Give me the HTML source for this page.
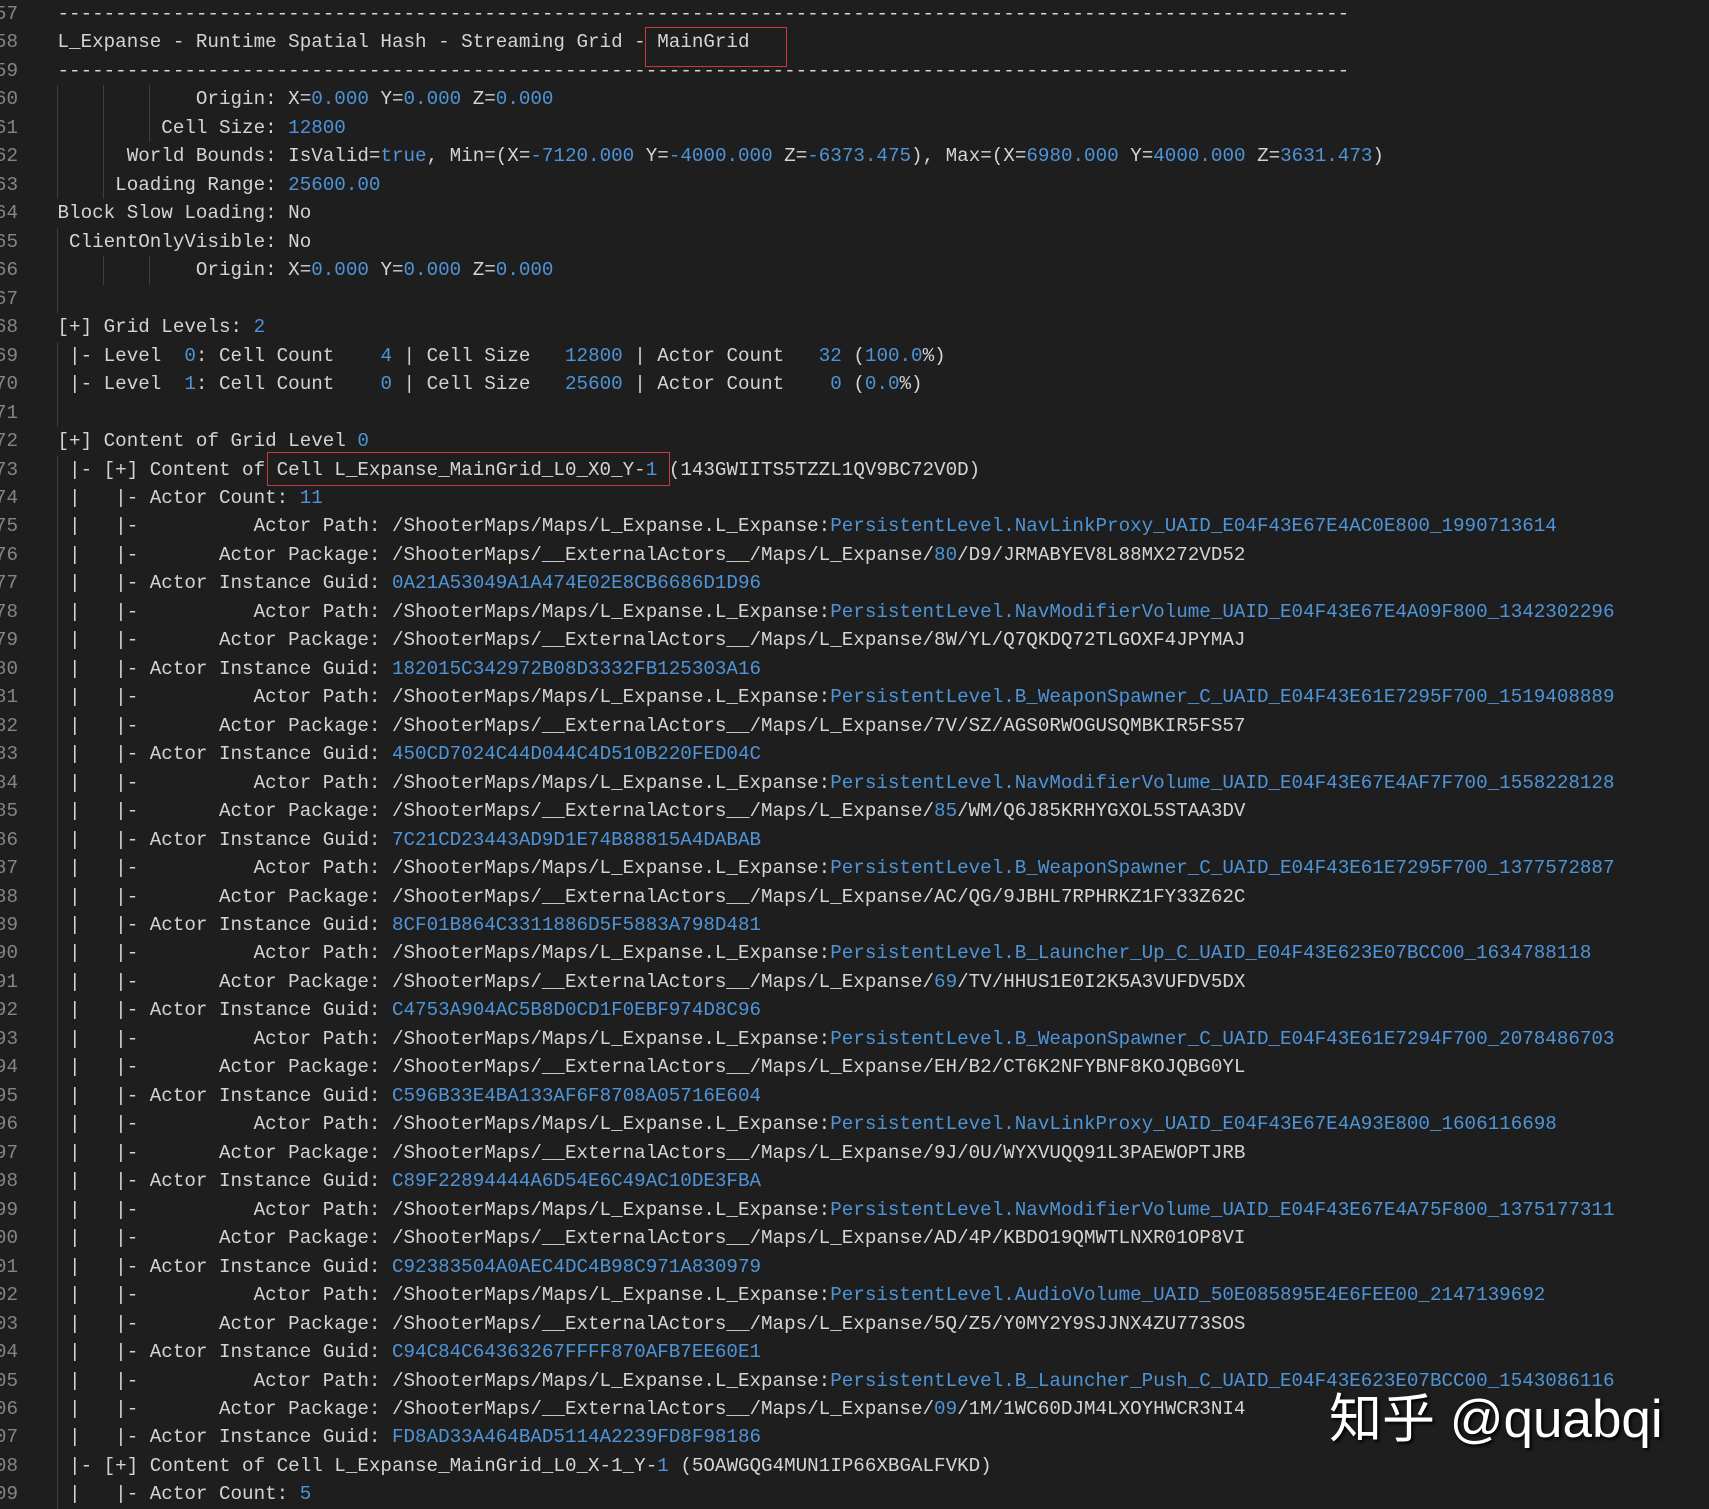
<!DOCTYPE html>
<html><head><meta charset="utf-8">
<style>
html,body{margin:0;padding:0;background:#1e1e1e;width:1709px;height:1501px;overflow:hidden;}
#c{position:absolute;left:0;top:0;width:1709px;}
.l{position:relative;height:28.47px;line-height:28.47px;padding-left:57.5px;white-space:pre;font-family:"Liberation Mono",monospace;font-size:19.23px;color:#d4d4d4;}
.l i{position:absolute;left:-40px;width:58px;text-align:right;font-style:normal;color:#858585;}
.b{color:#4e94d8;}
.a{background:linear-gradient(#3e3e3e,#3e3e3e) 57px 0/1px 100% no-repeat;}
.a2{background:linear-gradient(#3e3e3e,#3e3e3e) 57px 0/1px 100% no-repeat,linear-gradient(#3e3e3e,#3e3e3e) 103px 0/1px 100% no-repeat;}
.a3{background:linear-gradient(#3e3e3e,#3e3e3e) 57px 0/1px 100% no-repeat,linear-gradient(#3e3e3e,#3e3e3e) 103px 0/1px 100% no-repeat,linear-gradient(#3e3e3e,#3e3e3e) 149px 0/1px 100% no-repeat;}
.box{position:absolute;border:1.5px solid #c8393b;}
#wm{position:absolute;left:1329px;top:1389px;font-family:"Liberation Sans","Noto Sans CJK SC",sans-serif;font-size:53px;color:#fff;line-height:62px;white-space:pre;text-shadow:2px 2px 3px #000;}
</style></head><body>
<div id="c">
<div class="l"><i>57</i>----------------------------------------------------------------------------------------------------------------</div>
<div class="l"><i>58</i>L_Expanse - Runtime Spatial Hash - Streaming Grid - MainGrid</div>
<div class="l"><i>59</i>----------------------------------------------------------------------------------------------------------------</div>
<div class="l a3"><i>60</i>            Origin: X=<span class="b">0.000</span> Y=<span class="b">0.000</span> Z=<span class="b">0.000</span></div>
<div class="l a3"><i>61</i>         Cell Size: <span class="b">12800</span></div>
<div class="l a2"><i>62</i>      World Bounds: IsValid=<span class="b">true</span>, Min=(X=<span class="b">-7120.000</span> Y=<span class="b">-4000.000</span> Z=<span class="b">-6373.475</span>), Max=(X=<span class="b">6980.000</span> Y=<span class="b">4000.000</span> Z=<span class="b">3631.473</span>)</div>
<div class="l a2"><i>63</i>     Loading Range: <span class="b">25600.00</span></div>
<div class="l"><i>64</i>Block Slow Loading: No</div>
<div class="l a"><i>65</i> ClientOnlyVisible: No</div>
<div class="l a3"><i>66</i>            Origin: X=<span class="b">0.000</span> Y=<span class="b">0.000</span> Z=<span class="b">0.000</span></div>
<div class="l a"><i>67</i></div>
<div class="l"><i>68</i>[+] Grid Levels: <span class="b">2</span></div>
<div class="l a"><i>69</i> |- Level  <span class="b">0</span>: Cell Count    <span class="b">4</span> | Cell Size   <span class="b">12800</span> | Actor Count   <span class="b">32</span> (<span class="b">100.0</span>%)</div>
<div class="l a"><i>70</i> |- Level  <span class="b">1</span>: Cell Count    <span class="b">0</span> | Cell Size   <span class="b">25600</span> | Actor Count    <span class="b">0</span> (<span class="b">0.0</span>%)</div>
<div class="l a"><i>71</i></div>
<div class="l"><i>72</i>[+] Content of Grid Level <span class="b">0</span></div>
<div class="l a"><i>73</i> |- [+] Content of Cell L_Expanse_MainGrid_L0_X0_Y-<span class="b">1</span> (143GWIITS5TZZL1QV9BC72V0D)</div>
<div class="l a"><i>74</i> |   |- Actor Count: <span class="b">11</span></div>
<div class="l a"><i>75</i> |   |-          Actor Path: /ShooterMaps/Maps/L_Expanse.L_Expanse:<span class="b">PersistentLevel.NavLinkProxy_UAID_E04F43E67E4AC0E800_1990713614</span></div>
<div class="l a"><i>76</i> |   |-       Actor Package: /ShooterMaps/__ExternalActors__/Maps/L_Expanse/<span class="b">80</span>/D9/JRMABYEV8L88MX272VD52</div>
<div class="l a"><i>77</i> |   |- Actor Instance Guid: <span class="b">0A21A53049A1A474E02E8CB6686D1D96</span></div>
<div class="l a"><i>78</i> |   |-          Actor Path: /ShooterMaps/Maps/L_Expanse.L_Expanse:<span class="b">PersistentLevel.NavModifierVolume_UAID_E04F43E67E4A09F800_1342302296</span></div>
<div class="l a"><i>79</i> |   |-       Actor Package: /ShooterMaps/__ExternalActors__/Maps/L_Expanse/8W/YL/Q7QKDQ72TLGOXF4JPYMAJ</div>
<div class="l a"><i>80</i> |   |- Actor Instance Guid: <span class="b">182015C342972B08D3332FB125303A16</span></div>
<div class="l a"><i>81</i> |   |-          Actor Path: /ShooterMaps/Maps/L_Expanse.L_Expanse:<span class="b">PersistentLevel.B_WeaponSpawner_C_UAID_E04F43E61E7295F700_1519408889</span></div>
<div class="l a"><i>82</i> |   |-       Actor Package: /ShooterMaps/__ExternalActors__/Maps/L_Expanse/7V/SZ/AGS0RWOGUSQMBKIR5FS57</div>
<div class="l a"><i>83</i> |   |- Actor Instance Guid: <span class="b">450CD7024C44D044C4D510B220FED04C</span></div>
<div class="l a"><i>84</i> |   |-          Actor Path: /ShooterMaps/Maps/L_Expanse.L_Expanse:<span class="b">PersistentLevel.NavModifierVolume_UAID_E04F43E67E4AF7F700_1558228128</span></div>
<div class="l a"><i>85</i> |   |-       Actor Package: /ShooterMaps/__ExternalActors__/Maps/L_Expanse/<span class="b">85</span>/WM/Q6J85KRHYGXOL5STAA3DV</div>
<div class="l a"><i>86</i> |   |- Actor Instance Guid: <span class="b">7C21CD23443AD9D1E74B88815A4DABAB</span></div>
<div class="l a"><i>87</i> |   |-          Actor Path: /ShooterMaps/Maps/L_Expanse.L_Expanse:<span class="b">PersistentLevel.B_WeaponSpawner_C_UAID_E04F43E61E7295F700_1377572887</span></div>
<div class="l a"><i>88</i> |   |-       Actor Package: /ShooterMaps/__ExternalActors__/Maps/L_Expanse/AC/QG/9JBHL7RPHRKZ1FY33Z62C</div>
<div class="l a"><i>89</i> |   |- Actor Instance Guid: <span class="b">8CF01B864C3311886D5F5883A798D481</span></div>
<div class="l a"><i>90</i> |   |-          Actor Path: /ShooterMaps/Maps/L_Expanse.L_Expanse:<span class="b">PersistentLevel.B_Launcher_Up_C_UAID_E04F43E623E07BCC00_1634788118</span></div>
<div class="l a"><i>91</i> |   |-       Actor Package: /ShooterMaps/__ExternalActors__/Maps/L_Expanse/<span class="b">69</span>/TV/HHUS1E0I2K5A3VUFDV5DX</div>
<div class="l a"><i>92</i> |   |- Actor Instance Guid: <span class="b">C4753A904AC5B8D0CD1F0EBF974D8C96</span></div>
<div class="l a"><i>93</i> |   |-          Actor Path: /ShooterMaps/Maps/L_Expanse.L_Expanse:<span class="b">PersistentLevel.B_WeaponSpawner_C_UAID_E04F43E61E7294F700_2078486703</span></div>
<div class="l a"><i>94</i> |   |-       Actor Package: /ShooterMaps/__ExternalActors__/Maps/L_Expanse/EH/B2/CT6K2NFYBNF8KOJQBG0YL</div>
<div class="l a"><i>95</i> |   |- Actor Instance Guid: <span class="b">C596B33E4BA133AF6F8708A05716E604</span></div>
<div class="l a"><i>96</i> |   |-          Actor Path: /ShooterMaps/Maps/L_Expanse.L_Expanse:<span class="b">PersistentLevel.NavLinkProxy_UAID_E04F43E67E4A93E800_1606116698</span></div>
<div class="l a"><i>97</i> |   |-       Actor Package: /ShooterMaps/__ExternalActors__/Maps/L_Expanse/9J/0U/WYXVUQQ91L3PAEWOPTJRB</div>
<div class="l a"><i>98</i> |   |- Actor Instance Guid: <span class="b">C89F22894444A6D54E6C49AC10DE3FBA</span></div>
<div class="l a"><i>99</i> |   |-          Actor Path: /ShooterMaps/Maps/L_Expanse.L_Expanse:<span class="b">PersistentLevel.NavModifierVolume_UAID_E04F43E67E4A75F800_1375177311</span></div>
<div class="l a"><i>100</i> |   |-       Actor Package: /ShooterMaps/__ExternalActors__/Maps/L_Expanse/AD/4P/KBDO19QMWTLNXR01OP8VI</div>
<div class="l a"><i>101</i> |   |- Actor Instance Guid: <span class="b">C92383504A0AEC4DC4B98C971A830979</span></div>
<div class="l a"><i>102</i> |   |-          Actor Path: /ShooterMaps/Maps/L_Expanse.L_Expanse:<span class="b">PersistentLevel.AudioVolume_UAID_50E085895E4E6FEE00_2147139692</span></div>
<div class="l a"><i>103</i> |   |-       Actor Package: /ShooterMaps/__ExternalActors__/Maps/L_Expanse/5Q/Z5/Y0MY2Y9SJJNX4ZU773SOS</div>
<div class="l a"><i>104</i> |   |- Actor Instance Guid: <span class="b">C94C84C64363267FFFF870AFB7EE60E1</span></div>
<div class="l a"><i>105</i> |   |-          Actor Path: /ShooterMaps/Maps/L_Expanse.L_Expanse:<span class="b">PersistentLevel.B_Launcher_Push_C_UAID_E04F43E623E07BCC00_1543086116</span></div>
<div class="l a"><i>106</i> |   |-       Actor Package: /ShooterMaps/__ExternalActors__/Maps/L_Expanse/<span class="b">09</span>/1M/1WC60DJM4LXOYHWCR3NI4</div>
<div class="l a"><i>107</i> |   |- Actor Instance Guid: <span class="b">FD8AD33A464BAD5114A2239FD8F98186</span></div>
<div class="l a"><i>108</i> |- [+] Content of Cell L_Expanse_MainGrid_L0_X-1_Y-<span class="b">1</span> (5OAWGQG4MUN1IP66XBGALFVKD)</div>
<div class="l a"><i>109</i> |   |- Actor Count: <span class="b">5</span></div>
</div>
<div class="box" style="left:645px;top:27px;width:140px;height:38px;"></div>
<div class="box" style="left:267px;top:452px;width:401px;height:32px;"></div>
<div id="wm">知乎 @quabqi</div>
</body></html>
